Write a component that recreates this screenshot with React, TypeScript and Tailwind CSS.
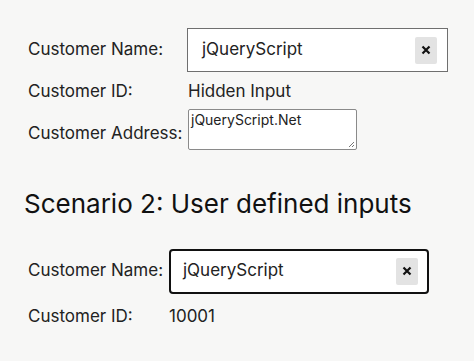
import React from "react";

function ClearBtn() {
  return (
    <span className="flex h-[27px] w-[22px] items-center justify-center rounded-[2px] bg-[#e3e3e3]">
      <svg width="10" height="10" viewBox="0 0 10 10">
        <path d="M1.5 1.5L8.5 8.5M8.5 1.5L1.5 8.5" stroke="#111" strokeWidth="2.2" strokeLinecap="butt" />
      </svg>
    </span>
  );
}

export default function App() {
  return (
    <div
      className="h-[361px] w-[474px] overflow-hidden whitespace-nowrap bg-[#f7f7f6] text-[#222]"
      style={{ fontFamily: "Inter, 'Noto Sans', sans-serif" }}
    >
      <div className="pl-[28px] pt-[28px]">
        <div className="grid grid-cols-[159px_auto] items-center text-[17px]">
          <div>Customer Name:</div>
          <div className="flex h-[44px] w-[261px] items-center justify-between border border-[#6f6f6f] bg-white pl-[14px] pr-[10px]">
            <span>jQueryScript</span>
            <ClearBtn />
          </div>
          <div className="pt-[7px]">Customer ID:</div>
          <div className="pt-[7px] pl-[1px]">Hidden Input</div>
          <div className="self-start pt-[16px]">Customer Address:</div>
          <div className="self-start pt-[4px] pl-[1px]">
            <div className="relative h-[41px] w-[169px] rounded-[2px] border border-[#8a8a8a] bg-white pl-[2px] pt-[1px] text-[14px] leading-[18px]">
              jQueryScript.Net
              <svg className="absolute bottom-[1px] right-[1px]" width="7" height="7" viewBox="0 0 7 7">
                <path d="M6 1L1 6M6 4L4 6" stroke="#777" strokeWidth="1" />
              </svg>
            </div>
          </div>
        </div>
      </div>
      <div className="pl-[24px] pt-[38px] text-[26px] leading-[32px] text-[#111]">Scenario 2: User defined inputs</div>
      <div className="pl-[28px] pt-[29px]">
        <div className="grid grid-cols-[141px_auto] items-center text-[17px]">
          <div>Customer Name:</div>
          <div className="flex h-[45px] w-[260px] items-center justify-between rounded-[4px] border-2 border-[#111] bg-white pl-[12px] pr-[9px]">
            <span>jQueryScript</span>
            <ClearBtn />
          </div>
          <div className="pt-[10px]">Customer ID:</div>
          <div className="pt-[10px]">10001</div>
        </div>
      </div>
    </div>
  );
}
